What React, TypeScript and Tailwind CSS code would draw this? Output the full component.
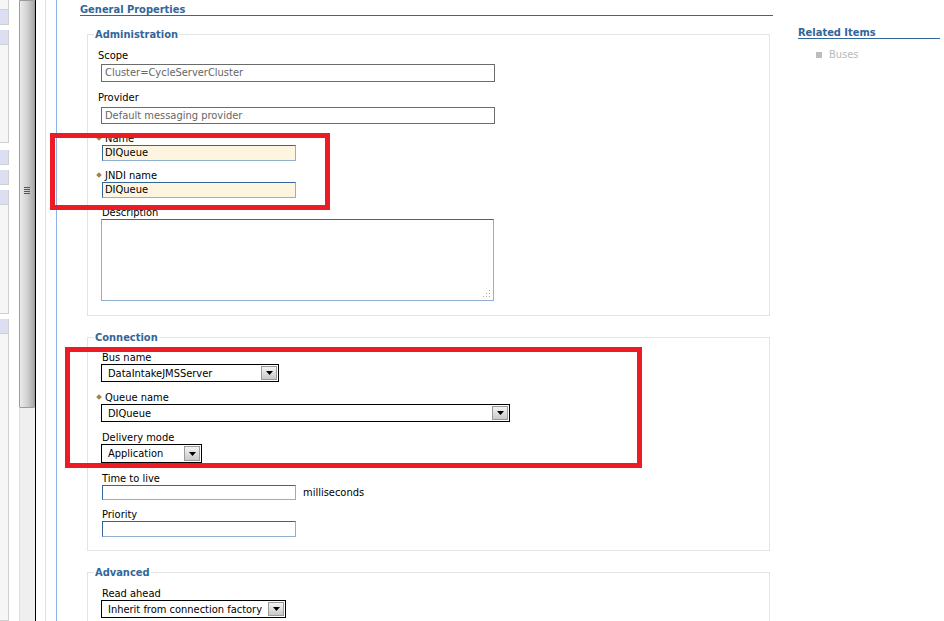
import React from "react";

const font = { fontFamily: '"DejaVu Sans Condensed", "DejaVu Sans", Tahoma, sans-serif' };

function Bullet() {
  return <span className="inline-block w-[4px] h-[4px] rotate-45 bg-[#9a8848] mr-[4px] mb-[2px]" />;
}

function Select({ value, width, height = 18 }: { value: string; width: number; height?: number }) {
  return (
    <div
      className="flex items-stretch border border-black bg-white"
      style={{ width, height }}
    >
      <div className="flex-1 pl-[6px] text-[11px] leading-none flex items-center text-black">{value}</div>
      <div className="w-[16px] m-px border border-[#9a9a9a] bg-gradient-to-b from-[#f4f4f4] to-[#c9c9c9] flex items-center justify-center">
        <svg width="7" height="4" viewBox="0 0 7 4">
          <path d="M0 0h7L3.5 4z" fill="#000" />
        </svg>
      </div>
    </div>
  );
}

function ReqInput({ value }: { value: string }) {
  return (
    <div className="ml-[5px] w-[194px] h-[16px] bg-[#fdf5df] border border-[#8fb0d0] border-t-[#33669a] border-l-[#33669a] pl-[2px] text-[11px] leading-[14px] text-black">
      {value}
    </div>
  );
}

function Sidebar() {
  const boxes: [string, number][] = [
    ["bg-[#f6f6f6]", 10],
    ["bg-[#dcdff2]", 15],
    ["bg-white", 5],
    ["bg-[#dcdff2]", 15],
    ["bg-[#f6f6f6]", 100],
    ["bg-white", 7],
    ["bg-[#dcdff2]", 15],
    ["bg-white", 5],
    ["bg-[#dcdff2]", 15],
    ["bg-white", 5],
    ["bg-[#dcdff2]", 15],
    ["bg-[#f6f6f6]", 111],
    ["bg-white", 5],
    ["bg-[#dcdff2]", 15],
    ["bg-[#f6f6f6]", 290],
  ];
  return (
    <div className="flex h-full shrink-0">
      <div className="w-[9px] flex flex-col">
        {boxes.map(([c, h], i) => (
          <div
            key={i}
            className={`${c} ${c === "bg-white" ? "" : "border-r border-b border-[#cfcfcf]"}`}
            style={{ height: h }}
          />
        ))}
      </div>
      <div className="w-[10px]" />
      <div className="w-[16px] flex flex-col">
        <div className="h-[408px] border border-[#9c9c9c] rounded-b-[1px] bg-gradient-to-r from-[#ebebeb] via-[#d2d2d2] to-[#a9a9a9] flex items-center justify-center">
          <div className="flex flex-col gap-[1px] mt-[-28px]">
            <div className="w-[6px] h-px bg-[#555]" />
            <div className="w-[6px] h-px bg-[#555]" />
            <div className="w-[6px] h-px bg-[#555]" />
            <div className="w-[6px] h-px bg-[#555]" />
          </div>
        </div>
        <div className="flex-1 bg-[#efefef] border-l border-[#dcdcdc]" />
      </div>
      <div className="w-px bg-black" />
      <div className="w-[9px]" />
      <div className="w-px bg-[#e0e0e0]" />
      <div className="w-[10px]" />
    </div>
  );
}

export default function App() {
  return (
    <div className="relative flex h-[621px] w-[944px] overflow-hidden bg-white text-black" style={font}>
      <Sidebar />
      <div className="flex-1 flex border-l border-[#8fb1e3]">
        <div className="ml-[23px] w-[693px] shrink-0">
          <div className="mt-[4px] text-[11px] leading-[11px] font-bold text-[#336699] border-b border-[#336699]">
            General Properties
          </div>

          <fieldset className="mt-[12px] ml-[7px] w-[683px] border border-[#e4e4e4] pl-[9px] pb-[14px]">
            <legend className="ml-[-3px] px-[1px] text-[11px] leading-[13px] font-bold text-[#336699]">Administration</legend>
            <div className="mt-[8px] ml-[1px] text-[11px] leading-[13px]">Scope</div>
            <div className="mt-[2px] ml-[4px] w-[394px] h-[18px] border border-[#6b6b6b] pl-[3px] text-[11px] leading-[16px] text-[#666]">
              Cluster=CycleServerCluster
            </div>
            <div className="mt-[9px] ml-[1px] text-[11px] leading-[13px]">Provider</div>
            <div className="mt-[3px] ml-[4px] w-[394px] h-[17px] border border-[#6b6b6b] pl-[3px] text-[11px] leading-[15px] text-[#666]">
              Default messaging provider
            </div>
            <div className="mt-[9px] text-[11px] leading-[12px]"><Bullet />Name</div>
            <ReqInput value="DIQueue" />
            <div className="mt-[9px] text-[11px] leading-[12px]"><Bullet />JNDI name</div>
            <ReqInput value="DIQueue" />
            <div className="mt-[9px] ml-[5px] text-[11px] leading-[12px]">Description</div>
            <div className="relative ml-[4px] w-[393px] h-[82px] border border-[#8fb0d0] border-t-[#33669a]">
              <svg className="absolute right-[2px] bottom-[2px]" width="8" height="8" viewBox="0 0 8 8">
                <g fill="#a8a8a8">
                  <rect x="6" y="0" width="1" height="1" />
                  <rect x="6" y="3" width="1" height="1" />
                  <rect x="3" y="3" width="1" height="1" />
                  <rect x="6" y="6" width="1" height="1" />
                  <rect x="3" y="6" width="1" height="1" />
                  <rect x="0" y="6" width="1" height="1" />
                </g>
              </svg>
            </div>
          </fieldset>

          <fieldset className="mt-[15px] ml-[7px] w-[683px] border border-[#e4e4e4] pl-[9px] pb-[13px]">
            <legend className="ml-[-3px] px-[1px] text-[11px] leading-[13px] font-bold text-[#336699]">Connection</legend>
            <div className="mt-[8px] ml-[5px] text-[11px] leading-[12px]">Bus name</div>
            <div className="ml-[4px]"><Select value="DataIntakeJMSServer" width={178} /></div>
            <div className="mt-[10px] text-[11px] leading-[12px]"><Bullet />Queue name</div>
            <div className="ml-[4px]"><Select value="DIQueue" width={409} /></div>
            <div className="mt-[10px] ml-[5px] text-[11px] leading-[12px]">Delivery mode</div>
            <div className="ml-[4px]"><Select value="Application" width={101} height={19} /></div>
            <div className="mt-[10px] ml-[5px] text-[11px] leading-[12px]">Time to live</div>
            <div className="flex items-center ml-[5px]">
              <div className="w-[194px] h-[15px] border border-[#8fb0d0] border-t-[#33669a] border-l-[#33669a]" />
              <span className="ml-[7px] text-[11px] leading-[13px]">milliseconds</span>
            </div>
            <div className="mt-[9px] ml-[5px] text-[11px] leading-[12px]">Priority</div>
            <div className="ml-[5px] w-[194px] h-[16px] border border-[#8fb0d0] border-t-[#33669a] border-l-[#33669a]" />
          </fieldset>

          <fieldset className="mt-[15px] ml-[7px] w-[683px] border border-[#e4e4e4] pl-[9px] pb-[14px]">
            <legend className="ml-[-3px] px-[1px] text-[11px] leading-[13px] font-bold text-[#336699]">Advanced</legend>
            <div className="mt-[8px] ml-[5px] text-[11px] leading-[13px]">Read ahead</div>
            <div className="ml-[4px]"><Select value="Inherit from connection factory" width={185} /></div>
          </fieldset>
        </div>

        <div className="ml-[25px] w-[142px] shrink-0">
          <div className="mt-[27px] text-[11px] leading-[11px] font-bold text-[#336699] border-b border-[#336699]">
            Related Items
          </div>
          <div className="mt-[9px] ml-[18px] flex items-center text-[11px] leading-[13px] text-[#b8b8b8]">
            <span className="w-[6px] h-[6px] bg-[#bdbdbd] mr-[7px]" />
            Buses
          </div>
        </div>
      </div>

      <div className="absolute left-[50px] top-[133px] w-[280px] h-[77px] border-[5px] border-[#ed1c24]" />
      <div className="absolute left-[65px] top-[347px] w-[577px] h-[121px] border-[5px] border-[#ed1c24]" />
    </div>
  );
}
